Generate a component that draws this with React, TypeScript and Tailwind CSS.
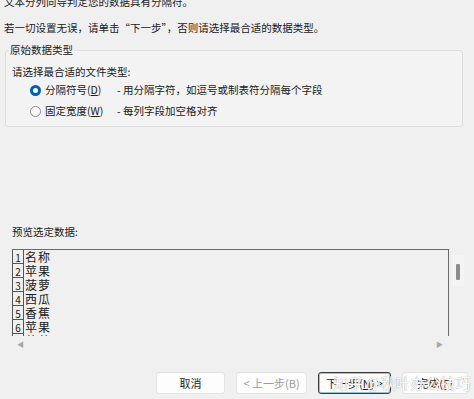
const font = "font-['Noto_Sans_CJK_SC','Noto_Sans',sans-serif]";

const rows = ["名称", "苹果", "菠萝", "西瓜", "香蕉", "苹果", "菠萝"];

function Radio({ checked }: { checked: boolean }) {
  return checked ? (
    <span className="flex h-[11px] w-[11px] items-center justify-center rounded-full bg-[#005fb8]">
      <span className="h-[5px] w-[5px] rounded-full bg-white" />
    </span>
  ) : (
    <span className="h-[11px] w-[11px] rounded-full border border-[#8a8a8a] bg-[#fbfbfb]" />
  );
}

function Btn({
  children,
  dim,
  focus,
  w,
}: {
  children: React.ReactNode;
  dim?: boolean;
  focus?: boolean;
  w: string;
}) {
  return (
    <div
      className={`flex h-[22px] items-center justify-center rounded-[3px] bg-[#fdfdfd] text-[11px] ${w} ${
        focus
          ? "border border-[#3c3c3c] shadow-[inset_0_0_0_1px_#9cc3cf]"
          : "border border-[#e3e3e3]"
      } ${dim ? "text-[#9a9a9a]" : "text-[#1e1e1e]"}`}
    >
      {children}
    </div>
  );
}

export default function App() {
  return (
    <div
      className={`relative h-[399px] w-[474px] overflow-hidden bg-[#f0f0f0] text-[#202020] ${font}`}
    >
      <p className="mt-[-5px] pl-[4px] text-[10.5px] leading-[14px]">
        文本分列向导判定您的数据具有分隔符。
      </p>
      <p className="mt-[12px] pl-[4px] text-[10.5px] leading-[14px]">
        若一切设置无误，请单击“下一步”，否则请选择最合适的数据类型。
      </p>

      <fieldset className="mx-[5px] mt-[8px] w-[458px] rounded-[3px] border border-[#dedede] bg-[#f3f3f3] pb-[5px] pl-[6px]">
        <legend className="-ml-[3px] px-[1px] text-[10.5px] leading-[14px]">
          原始数据类型
        </legend>
        <p className="mt-[8px] text-[10.5px] leading-[14px]">
          请选择最合适的文件类型:
        </p>
        <div className="mt-[1px] flex h-[20px] items-center pl-[18px] text-[10.5px]">
          <Radio checked />
          <span className="ml-[4px] w-[72px]">
            分隔符号(<span className="underline">D</span>)
          </span>
          <span>- 用分隔字符，如逗号或制表符分隔每个字段</span>
        </div>
        <div className="mt-[1px] flex h-[20px] items-center pl-[18px] text-[10.5px]">
          <Radio checked={false} />
          <span className="ml-[4px] w-[72px]">
            固定宽度(<span className="underline">W</span>)
          </span>
          <span>- 每列字段加空格对齐</span>
        </div>
      </fieldset>

      <p className="mt-[98px] pl-[12px] text-[10.5px] leading-[14px]">
        预览选定数据:
      </p>

      <div className="mt-[10px] flex pl-[12px]">
        <div className="h-[87px] w-[437px] overflow-hidden border-t border-r border-[#6b6b6b]">
          {rows.map((r, i) => (
            <div key={i} className="flex h-[14px]">
              <span className="flex w-[12px] items-end justify-center border-x border-b border-[#555] text-[10px] leading-[11px]">
                {i + 1}
              </span>
              <span className="pl-[1px] text-[12px] leading-[14px] tracking-[1px]">
                {r}
              </span>
            </div>
          ))}
        </div>
        <div className="ml-[3px] mt-[6px] h-[31px] w-[12px] bg-[#f4f4f4] pl-[4px] pt-[9px]">
          <div className="h-[16px] w-[4px] rounded-[1px] bg-[#8c8c8c]" />
        </div>
      </div>
      <div className="flex h-[16px] w-[449px] items-center justify-between pl-[17px] pr-[6px] text-[7px] text-[#a8a8a8]">
        <span>◀</span>
        <span>▶</span>
      </div>

      <div className="mt-[20px] flex justify-end gap-[11px] pr-[6px]">
        <Btn w="w-[69px]">取消</Btn>
        <Btn w="w-[71px]" dim>
          &lt; 上一步(B)
        </Btn>
        <Btn w="w-[73px]" focus>
          下一步(<span className="underline">N</span>) &gt;
        </Btn>
        <Btn w="w-[66px]">
          完成(<span className="underline">F</span>)
        </Btn>
      </div>

      <div className="absolute left-[333px] top-[374px] text-[15px] leading-[18px] text-white [text-shadow:0_0_1px_#7a7a7a]">
        知乎 @秋叶办公技巧
      </div>
    </div>
  );
}
